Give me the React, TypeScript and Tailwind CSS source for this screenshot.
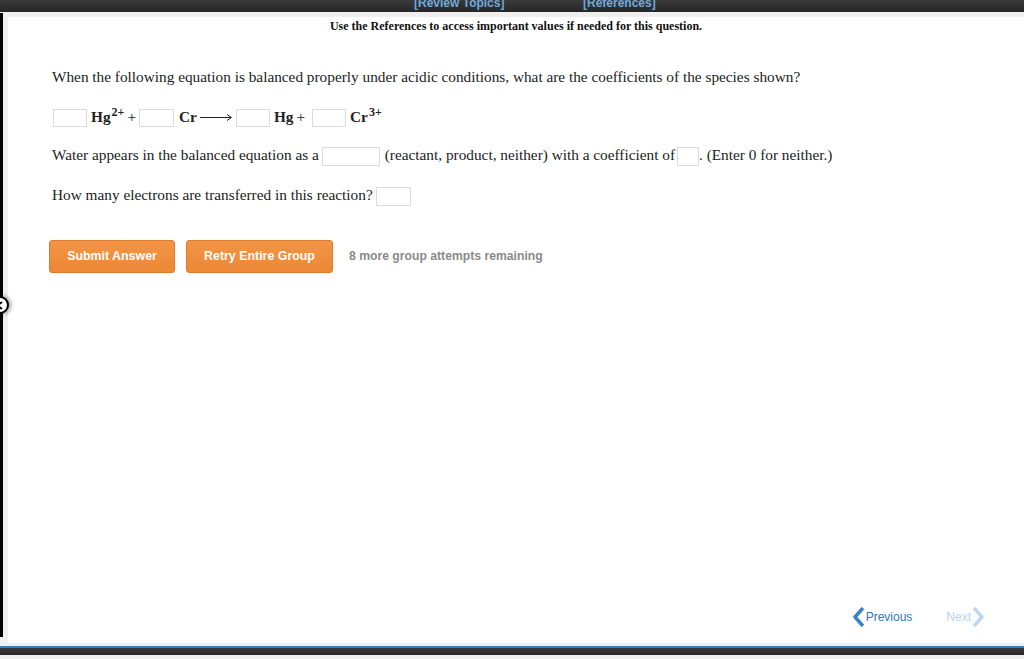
import React from "react";

const serif = { fontFamily: '"Liberation Serif", "Times New Roman", serif' };
const sans = { fontFamily: '"Liberation Sans", Arial, sans-serif' };

function Box({ w, h = 18 }: { w: number; h?: number }) {
  return (
    <span
      className="inline-block align-middle border border-[#dcdcdc] bg-white"
      style={{ width: w, height: h }}
    />
  );
}

export default function App() {
  return (
    <div className="relative w-[1024px] h-[659px] overflow-hidden bg-[#efefef]" style={sans}>
      {/* top bar */}
      <div className="relative h-[12px] bg-gradient-to-b from-[#3a3a3a] to-[#262626]">
        <span className="absolute left-[414px] top-[-4px] text-[12px] font-bold text-[#6fa8dc] leading-[14px]">[Review Topics]</span>
        <span className="absolute left-[583px] top-[-4px] text-[12px] font-bold text-[#6fa8dc] leading-[14px]">[References]</span>
      </div>

      {/* middle */}
      <div className="flex h-[631px]">
        <div className="w-[3px] mt-[1px] h-[624px] bg-black" />
        <div className="flex-1 pl-[5px] pt-[5px]">
          <div className="h-full bg-white relative" style={serif}>
            <div className="pt-[2px] text-center text-[12px] font-bold text-[#111] leading-[14px]">
              Use the References to access important values if needed for this question.
            </div>

            <div className="pl-[44px] text-[15.3px] text-[#222]">
              <p className="mt-[35px] leading-[18px]">
                When the following equation is balanced properly under acidic conditions, what are the coefficients of the species shown?
              </p>

              <div className="mt-[22px] flex items-center h-[18px] leading-[18px]">
                <span className="ml-[1px]"><Box w={34} /></span>
                <span className="ml-[4px] font-bold">Hg<sup className="text-[12px] relative top-[-6px] ml-[1px]">2+</sup></span>
                <span className="ml-[3px]">+</span>
                <span className="ml-[3px]"><Box w={35} /></span>
                <span className="ml-[5px] font-bold">Cr</span>
                <svg width="33" height="10" viewBox="0 0 33 10" className="ml-[3px]">
                  <path d="M0 5.5 H31" stroke="#222" strokeWidth="1" />
                  <path d="M27 2.5 L31.5 5.5 L27 8.5" fill="none" stroke="#222" strokeWidth="1" />
                </svg>
                <span className="ml-[3px]"><Box w={34} /></span>
                <span className="ml-[4px] font-bold">Hg</span>
                <span className="ml-[3px]">+</span>
                <span className="ml-[7px]"><Box w={34} /></span>
                <span className="ml-[4px] font-bold">Cr<sup className="text-[12px] relative top-[-6px] ml-[1px]">3+</sup></span>
              </div>

              <div className="mt-[20px] flex items-center h-[19px]">
                <span>Water appears in the balanced equation as a</span>
                <span className="ml-[3px]"><Box w={58} h={19} /></span>
                <span className="ml-[5px]">(reactant, product, neither) with a coefficient of</span>
                <span className="ml-[2px]"><Box w={22} h={19} /></span>
                <span>. (Enter 0 for neither.)</span>
              </div>

              <div className="mt-[21px] flex items-center h-[19px]">
                <span>How many electrons are transferred in this reaction?</span>
                <span className="ml-[3px]"><Box w={35} h={19} /></span>
              </div>
            </div>

            <div className="mt-[35px] ml-[41px] flex items-center" style={sans}>
              <button className="w-[126px] h-[33px] rounded-[3px] border border-[#e07a2c] bg-gradient-to-b from-[#f29446] to-[#ec8836] text-white text-[12.4px] font-bold">
                Submit Answer
              </button>
              <button className="ml-[11px] w-[147px] h-[33px] rounded-[3px] border border-[#e07a2c] bg-gradient-to-b from-[#f29446] to-[#ec8836] text-white text-[12.4px] font-bold">
                Retry Entire Group
              </button>
              <span className="ml-[16px] text-[12.2px] font-bold text-[#8a8a8a]">8 more group attempts remaining</span>
            </div>

            {/* nav */}
            <div className="absolute right-[40px] bottom-[16px] flex items-center text-[12px]" style={sans}>
              <svg width="12" height="20" viewBox="0 0 12 20">
                <path d="M10 1 L2 10 L10 19" fill="none" stroke="#3a84c4" strokeWidth="3.5" strokeLinejoin="round" />
              </svg>
              <span className="ml-[1px] text-[#2f78b8]">Previous</span>
              <span className="ml-[34px] text-[#b9d5ec]">Next</span>
              <svg width="12" height="20" viewBox="0 0 12 20" className="ml-[1px]">
                <path d="M2 1 L10 10 L2 19" fill="none" stroke="#bcd7ee" strokeWidth="3.5" strokeLinejoin="round" />
              </svg>
            </div>
          </div>
        </div>
      </div>

      {/* bottom */}
      <div className="h-[3px] bg-[#efefef]" />
      <div className="h-[2px] bg-[#3180c0]" />
      <div className="h-[7px] bg-gradient-to-b from-[#3a3a3a] to-[#262626]" />
      <div className="h-[4px] bg-[#efefef]" />

      {/* collapse circle */}
      <div className="absolute left-[-9px] top-[296px] w-[18px] h-[18px] rounded-full bg-white border-2 border-black flex items-center justify-end pr-[4px] shadow-[2px_0_4px_rgba(0,0,0,0.4)]">
        <svg width="7" height="9" viewBox="0 0 7 9">
          <path d="M6 1 L1.5 4.5 L6 8" fill="none" stroke="#000" strokeWidth="2" />
        </svg>
      </div>
    </div>
  );
}
